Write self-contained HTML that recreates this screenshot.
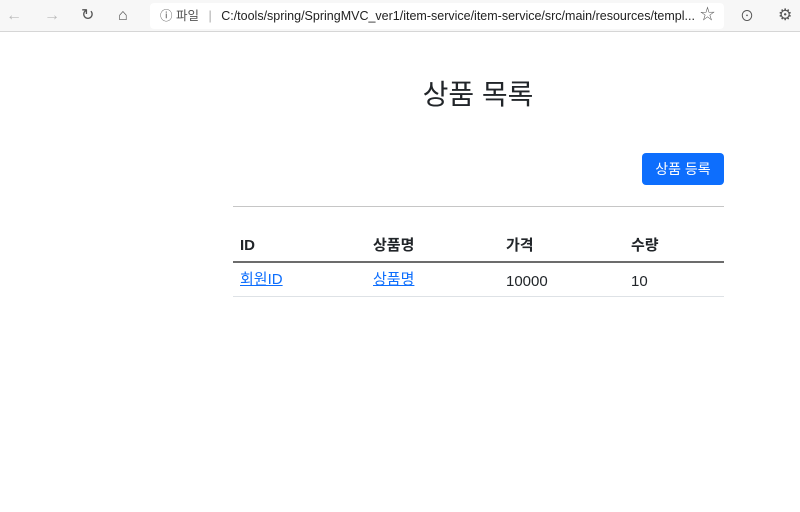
<!DOCTYPE html>
<html><head><meta charset="utf-8"><style>
*{margin:0;padding:0;box-sizing:border-box}
body{width:800px;height:512px;background:#fff;font-family:"Liberation Sans","Noto Sans CJK KR",sans-serif;position:relative;overflow:hidden;color:#212529}
.bar{position:absolute;left:0;top:0;width:800px;height:32px;background:#f7f7f7;border-bottom:1px solid #d6d6d6}
.url{position:absolute;left:150px;top:3px;width:574px;height:26px;background:#fff;border-radius:4px;font-size:12.5px;color:#222;line-height:26px;padding-left:10px;white-space:nowrap;overflow:hidden}
.ic{position:absolute;top:7px;color:#555;font-size:16px;line-height:18px}
.a{position:absolute;font-size:15px;line-height:20px;height:20px}
h2{position:absolute;left:0;width:956px;text-align:center;top:73px;font-size:28px;font-weight:400;color:#212529}
.btn{position:absolute;left:642px;top:153px;width:82px;height:32px;background:#0d6efd;border-radius:4px;color:#fff;font-size:14px;text-align:center;line-height:32px}
.hr{position:absolute;left:233px;width:491px;top:206px;height:1px;background:#c6c6c6}
.th{font-weight:700;top:236px}
a{color:#0d6efd}
</style></head><body>
<div class="bar">
<span class="ic" style="left:6px;color:#bbb">←</span>
<span class="ic" style="left:44px;color:#bbb">→</span>
<span class="ic" style="left:81px">↻</span>
<span class="ic" style="left:118px">⌂</span>
<div class="url"><span style="color:#555">ⓘ 파일</span> <span style="color:#aaa;margin:0 6px">|</span> C:/tools/spring/SpringMVC_ver1/item-service/item-service/src/main/resources/templ...</div>
<span class="ic" style="left:700px;top:6px;font-size:15px">☆</span>
<span class="ic" style="left:740px;font-size:14px">⊙</span>
<span class="ic" style="left:778px">⚙</span>
</div>
<h2>상품 목록</h2>
<div class="btn">상품 등록</div>
<div class="hr"></div>
<div class="a th" style="left:240px;top:236px">ID</div>
<div class="a th" style="left:373px">상품명</div>
<div class="a th" style="left:506px">가격</div>
<div class="a th" style="left:631px">수량</div>
<div style="position:absolute;left:233px;width:491px;top:261px;height:2px;background:#6c6c6c"></div>
<div class="a" style="left:240px;top:270px"><a href="#">회원ID</a></div>
<div class="a" style="left:373px;top:270px"><a href="#">상품명</a></div>
<div class="a" style="left:506px;top:272px">10000</div>
<div class="a" style="left:631px;top:272px">10</div>
<div style="position:absolute;left:233px;width:491px;top:296px;height:1px;background:#dee2e6"></div>
</body></html>
